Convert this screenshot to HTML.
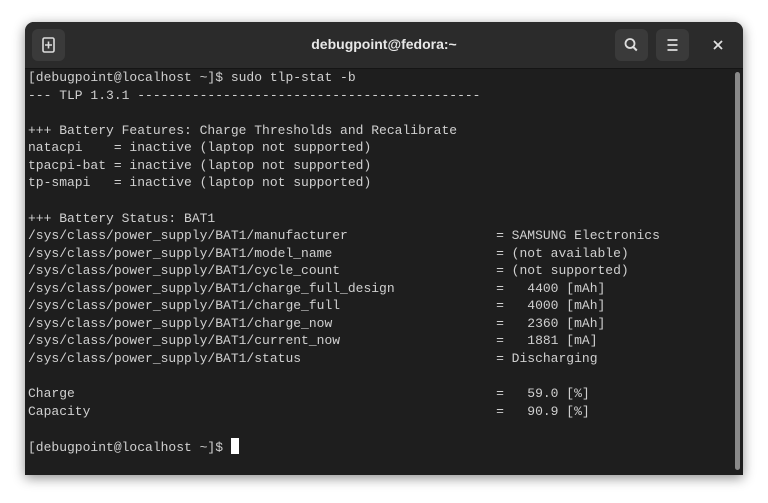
<!DOCTYPE html>
<html><head><style>
body{margin:0;width:768px;height:503px;background:#fff;overflow:hidden;position:relative}
.win{position:absolute;left:25px;top:22px;width:718px;height:453px;background:#1e1e1e;border-radius:9px 9px 0 0;box-shadow:0 3px 12px rgba(0,0,0,.45);overflow:hidden}
.hdr{height:46px;background:#2b2b2b;border-bottom:1px solid #151515;position:relative}
.title{position:absolute;left:0;right:0;top:14px;text-align:center;color:#e8e8e8;font:bold 14px "Liberation Sans",sans-serif}
.btn{position:absolute;top:7px;width:33px;height:32px;background:#3a3a3a;border-radius:6px}
pre{position:absolute;left:3px;top:47px;margin:0;color:#d0d0d0;font:13px/17.57px "Liberation Mono",monospace;white-space:pre}
.cur{display:inline-block;width:8px;height:16px;background:#fff;vertical-align:-3px}
.sb{position:absolute;left:710px;top:50px;width:5px;height:398px;background:#8a8a8a;border-radius:3px}
</style></head><body>
<div class="win">
<div class="hdr">
<div class="btn" style="left:7px"><svg width="33" height="32"><rect x="11" y="9" width="11" height="14" rx="1.5" fill="none" stroke="#ddd" stroke-width="1.6"/><path d="M16.5 12.5v7M13 16h7" stroke="#ddd" stroke-width="1.6"/></svg></div>
<div class="title">debugpoint@fedora:~</div>
<div class="btn" style="left:590px"><svg width="33" height="32"><circle cx="15" cy="14.5" r="4.5" fill="none" stroke="#ddd" stroke-width="1.8"/><path d="M18.3 18l3.5 3.5" stroke="#ddd" stroke-width="2"/></svg></div>
<div class="btn" style="left:631px"><svg width="33" height="32"><path d="M11.5 11h10M11.5 16h10M11.5 21h10" stroke="#ddd" stroke-width="1.8"/></svg></div>
<svg style="position:absolute;left:687px;top:17px" width="12" height="12"><path d="M2 2l8 8M10 2l-8 8" stroke="#e0e0e0" stroke-width="1.8"/></svg>
</div>
<pre>[debugpoint@localhost ~]$ sudo tlp-stat -b
--- TLP 1.3.1 --------------------------------------------

+++ Battery Features: Charge Thresholds and Recalibrate
natacpi    = inactive (laptop not supported)
tpacpi-bat = inactive (laptop not supported)
tp-smapi   = inactive (laptop not supported)

+++ Battery Status: BAT1
/sys/class/power_supply/BAT1/manufacturer                   = SAMSUNG Electronics
/sys/class/power_supply/BAT1/model_name                     = (not available)
/sys/class/power_supply/BAT1/cycle_count                    = (not supported)
/sys/class/power_supply/BAT1/charge_full_design             =   4400 [mAh]
/sys/class/power_supply/BAT1/charge_full                    =   4000 [mAh]
/sys/class/power_supply/BAT1/charge_now                     =   2360 [mAh]
/sys/class/power_supply/BAT1/current_now                    =   1881 [mA]
/sys/class/power_supply/BAT1/status                         = Discharging

Charge                                                      =   59.0 [%]
Capacity                                                    =   90.9 [%]

[debugpoint@localhost ~]$ <span class="cur"></span></pre>
<div class="sb"></div>
</div>
</body></html>
